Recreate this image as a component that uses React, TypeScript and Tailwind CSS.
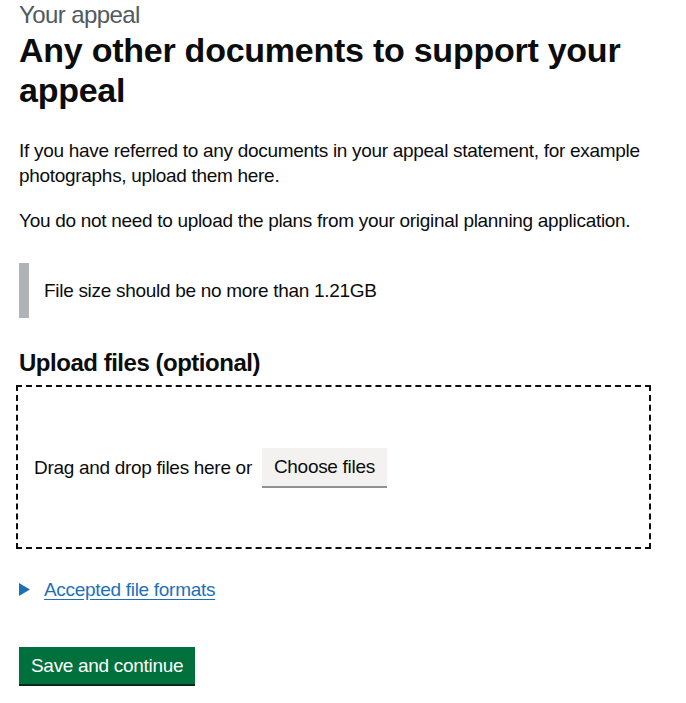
export default function App() {
  return (
    <div
      className="min-h-screen bg-white px-[19px] text-[#0b0c0c] tracking-[-0.3px]"
      style={{ fontFamily: '"Liberation Sans", Arial, sans-serif' }}
    >
      <span className="block text-[24px] leading-[30px] tracking-[-0.6px] text-[#505a5f]">
        Your appeal
      </span>
      <h1 className="text-[34px] font-bold leading-[40px] tracking-[-0.25px]">
        Any other documents to support your appeal
      </h1>

      <p className="mt-[28px] text-[19px] leading-[25px]">
        If you have referred to any documents in your appeal statement, for example photographs,
        upload them here.
      </p>
      <p className="mt-[20px] text-[19px] leading-[25px]">
        You do not need to upload the plans from your original planning application.
      </p>

      <div className="mt-[30px] border-l-[10px] border-[#b1b4b6] py-[15px] pl-[15px] text-[19px] leading-[25px]">
        File size should be no more than 1.21GB
      </div>

      <label className="mt-[30px] block text-[24px] font-bold leading-[30px] tracking-[-0.48px]">
        Upload files (optional)
      </label>

      <div className="-ml-[3px] mr-[16px] mt-[7px] flex items-center border-2 border-dashed border-[#0b0c0c] px-[16px] py-[61px]">
        <span className="text-[19px] leading-[25px]">Drag and drop files here or</span>
        <button className="ml-[10px] bg-[#f3f2f1] px-[12px] pb-[7px] pt-[6px] text-[19px] leading-[25px] shadow-[0_2px_0_#929191]">
          Choose files
        </button>
      </div>

      <div className="mt-[28px] flex items-center text-[19px] leading-[25px]">
        <svg width="12" height="13" viewBox="0 0 12 13" className="shrink-0">
          <path d="M0 0 L11 6.5 L0 13 Z" fill="#1d70b8" />
        </svg>
        <a href="#" className="ml-[13px] text-[#1d70b8] underline underline-offset-[3px]">
          Accepted file formats
        </a>
      </div>

      <button className="mt-[45px] bg-[#00703c] px-[12px] pb-[6px] pt-[7px] text-[19px] leading-[24px] text-white shadow-[0_2px_0_#002d18]">
        Save and continue
      </button>
    </div>
  );
}
